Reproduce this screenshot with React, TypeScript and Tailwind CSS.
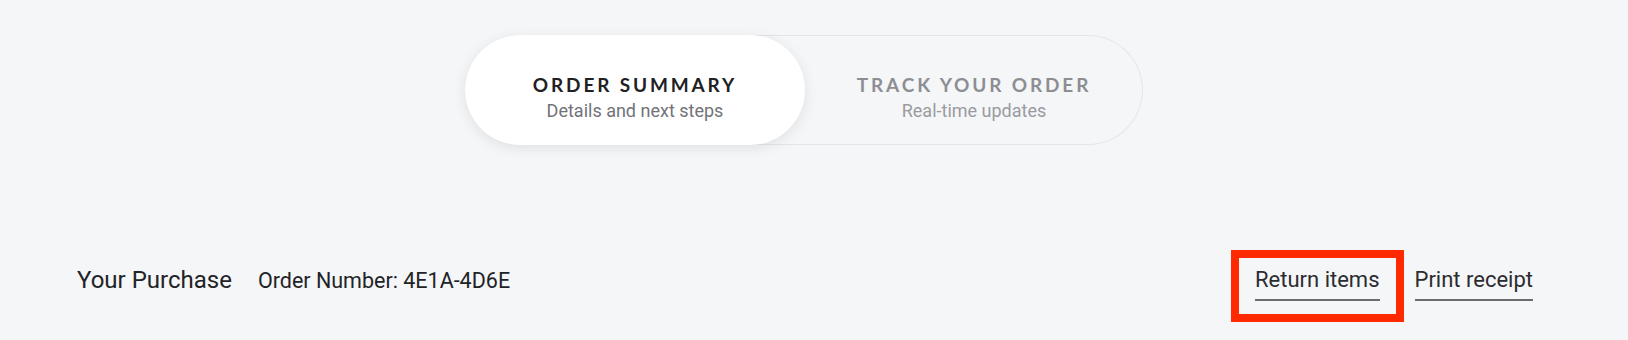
import React from 'react';

const tabs = [
  { title: 'ORDER SUMMARY', sub: 'Details and next steps', active: true },
  { title: 'TRACK YOUR ORDER', sub: 'Real-time updates', active: false },
];

export default function App() {
  return (
    <div className="min-h-[340px] w-full bg-[#f5f6f8] pt-[35px] font-['Roboto','Liberation_Sans',sans-serif]">
      {/* tab switcher */}
      <div className="flex justify-center pr-[20px]">
        <div className="flex h-[110px] w-[678px] rounded-full shadow-[inset_0_0_0_1px_#e4e5e8]">
          {tabs.map((t) => (
            <button
              key={t.title}
              className={
                t.active
                  ? 'flex h-full w-[340px] flex-col items-center rounded-full bg-white pt-[38px] shadow-[0_3px_14px_rgba(0,0,0,0.09)]'
                  : 'flex h-full flex-1 flex-col items-center rounded-full pt-[38px]'
              }
            >
              <span
                className={
                  'font-["Lato",sans-serif] text-[19px] font-bold leading-[24px] tracking-[0.15em] ' +
                  (t.active ? 'text-[#1f2023]' : 'text-[#8d8e93]')
                }
              >
                {t.title}
              </span>
              <span
                className={
                  'mt-[3px] text-[18px] leading-[22px] ' +
                  (t.active ? 'text-[#727378]' : 'text-[#9a9ba0]')
                }
              >
                {t.sub}
              </span>
            </button>
          ))}
        </div>
      </div>

      {/* purchase row */}
      <div className="mt-[105px] flex h-[72px] items-start justify-between pl-[77px] pr-[95px]">
        <div className="mt-[14px] flex items-baseline gap-[26px] text-[#222326]">
          <span className="text-[24px] leading-[32px]">Your Purchase</span>
          <span className="text-[21.5px] leading-[28px]">Order Number: 4E1A-4D6E</span>
        </div>
        <div className="flex items-start text-[22px] leading-[28px] text-[#2b2c30]">
          <div className="border-8 border-[#ff2a00] pb-[13px] pl-[16px] pr-[16px] pt-[8px]">
            <a href="#" className="block border-b-2 border-[#6b6c70] pb-[5px]">
              Return items
            </a>
          </div>
          <a href="#" className="ml-[11px] mt-[16px] block border-b-2 border-[#6b6c70] pb-[5px]">
            Print receipt
          </a>
        </div>
      </div>
    </div>
  );
}
